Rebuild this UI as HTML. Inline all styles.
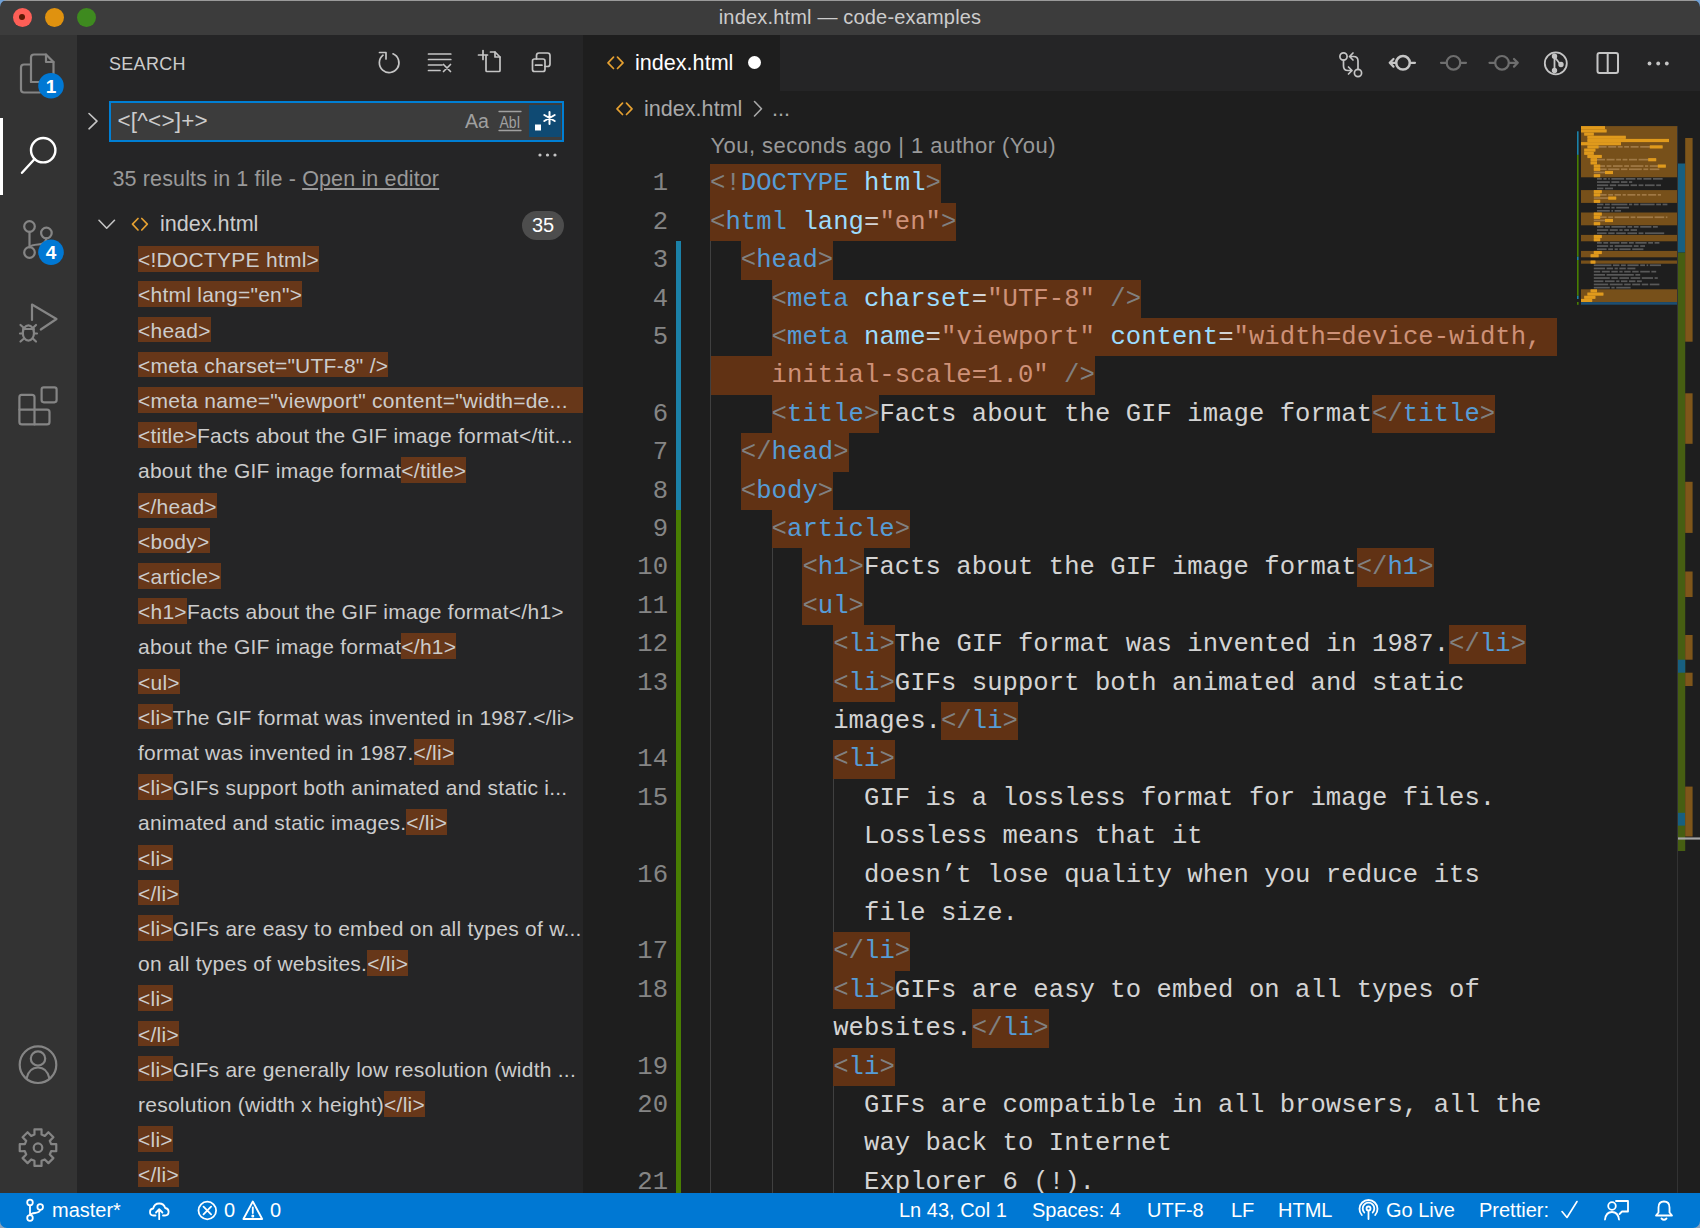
<!DOCTYPE html>
<html><head><meta charset="utf-8">
<style>
*{margin:0;padding:0;box-sizing:border-box}
html,body{width:1700px;height:1228px;overflow:hidden;background:#1e1e1e;font-family:"Liberation Sans",sans-serif}
.abs{position:absolute}
#title{position:absolute;left:0;top:0;width:1700px;height:35px;background:#3c3c3c;border-top:1px solid #9a9a9a}
#title .t{position:absolute;left:0;width:1700px;top:4.8px;text-align:center;color:#cccccc;font-size:20px;letter-spacing:0.18px}
.tl{position:absolute;top:6.6px;width:19px;height:19px;border-radius:50%}
#act{position:absolute;left:0;top:35px;width:77px;height:1158px;background:#333333}
#side{position:absolute;left:77px;top:35px;width:506px;height:1158px;background:#252526}
#tabs{position:absolute;left:583px;top:35px;width:1117px;height:56px;background:#252526}
#status{position:absolute;left:0;top:1193px;width:1700px;height:35px;background:#0078d3;color:#fff;font-size:20px}
.cl{position:absolute;white-space:pre;padding-top:1px;font-family:"Liberation Mono",monospace;font-size:25.60px;letter-spacing:0.037px;line-height:38.40px;height:38.40px}
.hl{position:absolute;height:38.40px;background:#613214}
.ln{position:absolute;padding-top:1px;left:600px;width:68px;text-align:right;font-family:"Liberation Mono",monospace;font-size:25.60px;line-height:38.40px;color:#858585}
.guide{position:absolute;width:1px;background:#404040}
.sr{position:absolute;left:138px;height:35.2px;padding-top:4.8px;white-space:pre;color:#cccccc;font-size:21px;letter-spacing:0.25px}
.sr span{display:inline-block;height:25.6px;line-height:27.6px;vertical-align:top}
.sr .m{background:#673719}
.sr .full{width:445px}
.st{position:absolute;top:0;line-height:35px;white-space:pre}
svg{position:absolute;overflow:visible}
</style></head><body>

<div id="title">
  <div class="tl" style="left:12.5px;background:#fe5f57"><div style="position:absolute;left:6.5px;top:6.5px;width:6px;height:6px;border-radius:50%;background:#5c1a06"></div></div>
  <div class="tl" style="left:44.5px;background:#e0920f"></div>
  <div class="tl" style="left:76.5px;background:#3e8a1f"></div>
  <div class="t">index.html — code-examples</div>
</div>

<div id="act">
  <div class="abs" style="left:0;top:83px;width:3px;height:77px;background:#ffffff"></div>
</div>

<div id="side">
  <div class="abs" style="left:32px;top:18.5px;color:#cccccc;font-size:18px;letter-spacing:0.3px">SEARCH</div>
  <div class="abs" style="left:32px;top:65.5px;width:455px;height:41px;background:#3c3c3c;border:2px solid #007fd4"></div>
  <div class="abs" style="left:40.5px;top:71px;color:#cccccc;font-size:22.5px;line-height:30px;letter-spacing:0.2px">&lt;[^&lt;&gt;]+&gt;</div>
  <div class="abs" style="left:452px;top:70px;width:32px;height:32px;background:#0f4a73"></div>
  <div class="abs" style="left:35.5px;top:129px;color:#999999;font-size:21.5px;line-height:30px;letter-spacing:0.14px">35 results in 1 file - <span style="text-decoration:underline">Open in editor</span></div>
  <div class="abs" style="left:83px;top:174px;color:#cccccc;font-size:21.6px;line-height:30px">index.html</div>
  <div class="abs" style="left:445px;top:176px;width:42px;height:29px;border-radius:15px;background:#4d4d4d;color:#fff;font-size:20px;line-height:29px;text-align:center">35</div>
</div>
<div class="abs" style="left:0;top:0">
<div class="sr" style="top:241.40px"><span class="m">&lt;!DOCTYPE html&gt;</span></div>
<div class="sr" style="top:276.60px"><span class="m">&lt;html lang="en"&gt;</span></div>
<div class="sr" style="top:311.80px"><span class="m">&lt;head&gt;</span></div>
<div class="sr" style="top:347.00px"><span class="m">&lt;meta charset="UTF-8" /&gt;</span></div>
<div class="sr" style="top:382.20px"><span class="m full">&lt;meta name="viewport" content="width=de...</span></div>
<div class="sr" style="top:417.40px"><span class="m">&lt;title&gt;</span><span>Facts about the GIF image format&lt;/tit...</span></div>
<div class="sr" style="top:452.60px"><span>about the GIF image format</span><span class="m">&lt;/title&gt;</span></div>
<div class="sr" style="top:487.80px"><span class="m">&lt;/head&gt;</span></div>
<div class="sr" style="top:523.00px"><span class="m">&lt;body&gt;</span></div>
<div class="sr" style="top:558.20px"><span class="m">&lt;article&gt;</span></div>
<div class="sr" style="top:593.40px"><span class="m">&lt;h1&gt;</span><span>Facts about the GIF image format&lt;/h1&gt;</span></div>
<div class="sr" style="top:628.60px"><span>about the GIF image format</span><span class="m">&lt;/h1&gt;</span></div>
<div class="sr" style="top:663.80px"><span class="m">&lt;ul&gt;</span></div>
<div class="sr" style="top:699.00px"><span class="m">&lt;li&gt;</span><span>The GIF format was invented in 1987.&lt;/li&gt;</span></div>
<div class="sr" style="top:734.20px"><span>format was invented in 1987.</span><span class="m">&lt;/li&gt;</span></div>
<div class="sr" style="top:769.40px"><span class="m">&lt;li&gt;</span><span>GIFs support both animated and static i...</span></div>
<div class="sr" style="top:804.60px"><span>animated and static images.</span><span class="m">&lt;/li&gt;</span></div>
<div class="sr" style="top:839.80px"><span class="m">&lt;li&gt;</span></div>
<div class="sr" style="top:875.00px"><span class="m">&lt;/li&gt;</span></div>
<div class="sr" style="top:910.20px"><span class="m">&lt;li&gt;</span><span>GIFs are easy to embed on all types of w...</span></div>
<div class="sr" style="top:945.40px"><span>on all types of websites.</span><span class="m">&lt;/li&gt;</span></div>
<div class="sr" style="top:980.60px"><span class="m">&lt;li&gt;</span></div>
<div class="sr" style="top:1015.80px"><span class="m">&lt;/li&gt;</span></div>
<div class="sr" style="top:1051.00px"><span class="m">&lt;li&gt;</span><span>GIFs are generally low resolution (width ...</span></div>
<div class="sr" style="top:1086.20px"><span>resolution (width x height)</span><span class="m">&lt;/li&gt;</span></div>
<div class="sr" style="top:1121.40px"><span class="m">&lt;li&gt;</span></div>
<div class="sr" style="top:1156.60px"><span class="m">&lt;/li&gt;</span></div>
</div>

<div id="tabs">
  <div class="abs" style="left:0;top:0;width:197px;height:56px;background:#1e1e1e"></div>
  <div class="abs" style="left:52px;top:13px;color:#ffffff;font-size:21.6px;line-height:30px">index.html</div>
  <div class="abs" style="left:165px;top:21px;width:13px;height:13px;border-radius:50%;background:#ffffff"></div>
</div>
<div class="abs" style="left:644px;top:94px;color:#a9a9a9;font-size:21.6px;line-height:30px">index.html</div>
<div class="abs" style="left:772px;top:94px;color:#a9a9a9;font-size:21.6px;line-height:30px">...</div>
<div class="abs" style="left:710.5px;top:131px;color:#999999;font-size:22px;line-height:30px;letter-spacing:0.45px">You, seconds ago | 1 author (You)</div>

<!-- git gutter -->
<div class="abs" style="left:676px;top:241.2px;width:5px;height:268.8px;background:#1b81a8"></div>
<div class="abs" style="left:676px;top:510px;width:5px;height:683px;background:#487e02"></div>

<div class="hl" style="left:710.00px;top:164.40px;width:231.00px"></div>
<div class="hl" style="left:710.00px;top:202.80px;width:246.40px"></div>
<div class="hl" style="left:740.80px;top:241.20px;width:92.40px"></div>
<div class="hl" style="left:771.60px;top:279.60px;width:369.60px"></div>
<div class="hl" style="left:771.60px;top:318.00px;width:785.40px"></div>
<div class="hl" style="left:710.00px;top:356.40px;width:385.00px"></div>
<div class="hl" style="left:771.60px;top:394.80px;width:107.80px"></div>
<div class="hl" style="left:1372.20px;top:394.80px;width:123.20px"></div>
<div class="hl" style="left:740.80px;top:433.20px;width:107.80px"></div>
<div class="hl" style="left:740.80px;top:471.60px;width:92.40px"></div>
<div class="hl" style="left:771.60px;top:510.00px;width:138.60px"></div>
<div class="hl" style="left:802.40px;top:548.40px;width:61.60px"></div>
<div class="hl" style="left:1356.80px;top:548.40px;width:77.00px"></div>
<div class="hl" style="left:802.40px;top:586.80px;width:61.60px"></div>
<div class="hl" style="left:833.20px;top:625.20px;width:61.60px"></div>
<div class="hl" style="left:1449.20px;top:625.20px;width:77.00px"></div>
<div class="hl" style="left:833.20px;top:663.60px;width:61.60px"></div>
<div class="hl" style="left:941.00px;top:702.00px;width:77.00px"></div>
<div class="hl" style="left:833.20px;top:740.40px;width:61.60px"></div>
<div class="hl" style="left:833.20px;top:932.40px;width:77.00px"></div>
<div class="hl" style="left:833.20px;top:970.80px;width:61.60px"></div>
<div class="hl" style="left:971.80px;top:1009.20px;width:77.00px"></div>
<div class="hl" style="left:833.20px;top:1047.60px;width:61.60px"></div>
<div class="cl" style="left:710.00px;top:164.40px"><span style="color:#808080">&lt;!</span><span style="color:#569cd6">DOCTYPE</span><span style="color:#d4d4d4"> </span><span style="color:#9cdcfe">html</span><span style="color:#808080">&gt;</span></div>
<div class="ln" style="top:164.40px">1</div>
<div class="cl" style="left:710.00px;top:202.80px"><span style="color:#808080">&lt;</span><span style="color:#569cd6">html</span><span style="color:#d4d4d4"> </span><span style="color:#9cdcfe">lang</span><span style="color:#d4d4d4">=</span><span style="color:#ce9178">"en"</span><span style="color:#808080">&gt;</span></div>
<div class="ln" style="top:202.80px">2</div>
<div class="cl" style="left:740.80px;top:241.20px"><span style="color:#808080">&lt;</span><span style="color:#569cd6">head</span><span style="color:#808080">&gt;</span></div>
<div class="ln" style="top:241.20px">3</div>
<div class="cl" style="left:771.60px;top:279.60px"><span style="color:#808080">&lt;</span><span style="color:#569cd6">meta</span><span style="color:#d4d4d4"> </span><span style="color:#9cdcfe">charset</span><span style="color:#d4d4d4">=</span><span style="color:#ce9178">"UTF-8"</span><span style="color:#808080"> /&gt;</span></div>
<div class="ln" style="top:279.60px">4</div>
<div class="cl" style="left:771.60px;top:318.00px"><span style="color:#808080">&lt;</span><span style="color:#569cd6">meta</span><span style="color:#d4d4d4"> </span><span style="color:#9cdcfe">name</span><span style="color:#d4d4d4">=</span><span style="color:#ce9178">"viewport"</span><span style="color:#d4d4d4"> </span><span style="color:#9cdcfe">content</span><span style="color:#d4d4d4">=</span><span style="color:#ce9178">"width=device-width,</span></div>
<div class="ln" style="top:318.00px">5</div>
<div class="cl" style="left:771.60px;top:356.40px"><span style="color:#ce9178">initial-scale=1.0"</span><span style="color:#808080"> /&gt;</span></div>
<div class="cl" style="left:771.60px;top:394.80px"><span style="color:#808080">&lt;</span><span style="color:#569cd6">title</span><span style="color:#808080">&gt;</span><span style="color:#d4d4d4">Facts about the GIF image format</span><span style="color:#808080">&lt;/</span><span style="color:#569cd6">title</span><span style="color:#808080">&gt;</span></div>
<div class="ln" style="top:394.80px">6</div>
<div class="cl" style="left:740.80px;top:433.20px"><span style="color:#808080">&lt;/</span><span style="color:#569cd6">head</span><span style="color:#808080">&gt;</span></div>
<div class="ln" style="top:433.20px">7</div>
<div class="cl" style="left:740.80px;top:471.60px"><span style="color:#808080">&lt;</span><span style="color:#569cd6">body</span><span style="color:#808080">&gt;</span></div>
<div class="ln" style="top:471.60px">8</div>
<div class="cl" style="left:771.60px;top:510.00px"><span style="color:#808080">&lt;</span><span style="color:#569cd6">article</span><span style="color:#808080">&gt;</span></div>
<div class="ln" style="top:510.00px">9</div>
<div class="cl" style="left:802.40px;top:548.40px"><span style="color:#808080">&lt;</span><span style="color:#569cd6">h1</span><span style="color:#808080">&gt;</span><span style="color:#d4d4d4">Facts about the GIF image format</span><span style="color:#808080">&lt;/</span><span style="color:#569cd6">h1</span><span style="color:#808080">&gt;</span></div>
<div class="ln" style="top:548.40px">10</div>
<div class="cl" style="left:802.40px;top:586.80px"><span style="color:#808080">&lt;</span><span style="color:#569cd6">ul</span><span style="color:#808080">&gt;</span></div>
<div class="ln" style="top:586.80px">11</div>
<div class="cl" style="left:833.20px;top:625.20px"><span style="color:#808080">&lt;</span><span style="color:#569cd6">li</span><span style="color:#808080">&gt;</span><span style="color:#d4d4d4">The GIF format was invented in 1987.</span><span style="color:#808080">&lt;/</span><span style="color:#569cd6">li</span><span style="color:#808080">&gt;</span></div>
<div class="ln" style="top:625.20px">12</div>
<div class="cl" style="left:833.20px;top:663.60px"><span style="color:#808080">&lt;</span><span style="color:#569cd6">li</span><span style="color:#808080">&gt;</span><span style="color:#d4d4d4">GIFs support both animated and static </span></div>
<div class="ln" style="top:663.60px">13</div>
<div class="cl" style="left:833.20px;top:702.00px"><span style="color:#d4d4d4">images.</span><span style="color:#808080">&lt;/</span><span style="color:#569cd6">li</span><span style="color:#808080">&gt;</span></div>
<div class="cl" style="left:833.20px;top:740.40px"><span style="color:#808080">&lt;</span><span style="color:#569cd6">li</span><span style="color:#808080">&gt;</span></div>
<div class="ln" style="top:740.40px">14</div>
<div class="cl" style="left:864.00px;top:778.80px"><span style="color:#d4d4d4">GIF is a lossless format for image files.</span></div>
<div class="ln" style="top:778.80px">15</div>
<div class="cl" style="left:864.00px;top:817.20px"><span style="color:#d4d4d4">Lossless means that it</span></div>
<div class="cl" style="left:864.00px;top:855.60px"><span style="color:#d4d4d4">doesn’t lose quality when you reduce its</span></div>
<div class="ln" style="top:855.60px">16</div>
<div class="cl" style="left:864.00px;top:894.00px"><span style="color:#d4d4d4">file size.</span></div>
<div class="cl" style="left:833.20px;top:932.40px"><span style="color:#808080">&lt;/</span><span style="color:#569cd6">li</span><span style="color:#808080">&gt;</span></div>
<div class="ln" style="top:932.40px">17</div>
<div class="cl" style="left:833.20px;top:970.80px"><span style="color:#808080">&lt;</span><span style="color:#569cd6">li</span><span style="color:#808080">&gt;</span><span style="color:#d4d4d4">GIFs are easy to embed on all types of</span></div>
<div class="ln" style="top:970.80px">18</div>
<div class="cl" style="left:833.20px;top:1009.20px"><span style="color:#d4d4d4">websites.</span><span style="color:#808080">&lt;/</span><span style="color:#569cd6">li</span><span style="color:#808080">&gt;</span></div>
<div class="cl" style="left:833.20px;top:1047.60px"><span style="color:#808080">&lt;</span><span style="color:#569cd6">li</span><span style="color:#808080">&gt;</span></div>
<div class="ln" style="top:1047.60px">19</div>
<div class="cl" style="left:864.00px;top:1086.00px"><span style="color:#d4d4d4">GIFs are compatible in all browsers, all the</span></div>
<div class="ln" style="top:1086.00px">20</div>
<div class="cl" style="left:864.00px;top:1124.40px"><span style="color:#d4d4d4">way back to Internet</span></div>
<div class="cl" style="left:864.00px;top:1162.80px"><span style="color:#d4d4d4">Explorer 6 (!).</span></div>
<div class="ln" style="top:1162.80px">21</div>
<div class="guide" style="left:710.00px;top:241.20px;height:960.00px"></div>
<div class="guide" style="left:771.60px;top:548.40px;height:652.80px"></div>
<div class="guide" style="left:833.20px;top:778.80px;height:153.60px"></div>
<div class="guide" style="left:833.20px;top:1086.00px;height:115.20px"></div>
<svg width="1700" height="1228" style="position:absolute;left:0;top:0"><rect x="1581.0" y="126.10" width="96.5" height="51.20" fill="#77501a"/><rect x="1581.0" y="190.10" width="96.5" height="12.80" fill="#77501a"/><rect x="1581.0" y="212.50" width="96.5" height="12.80" fill="#77501a"/><rect x="1581.0" y="234.90" width="96.5" height="6.40" fill="#77501a"/><rect x="1581.0" y="250.90" width="96.5" height="6.40" fill="#77501a"/><rect x="1581.0" y="260.50" width="96.5" height="3.20" fill="#77501a"/><rect x="1581.0" y="289.30" width="96.5" height="12.80" fill="#77501a"/><rect x="1581.0" y="126.80" width="14.4" height="1.7" fill="#c29a6a" opacity="0.55"/><rect x="1597.0" y="126.80" width="8.0" height="1.7" fill="#c29a6a" opacity="0.55"/><rect x="1581.0" y="126.10" width="24.0" height="3.20" fill="#e09a1c"/><rect x="1581.0" y="130.00" width="8.0" height="1.7" fill="#c29a6a" opacity="0.55"/><rect x="1590.6" y="130.00" width="16.0" height="1.7" fill="#c29a6a" opacity="0.55"/><rect x="1581.0" y="129.30" width="25.6" height="3.20" fill="#e09a1c"/><rect x="1584.2" y="133.20" width="9.6" height="1.7" fill="#c29a6a" opacity="0.55"/><rect x="1584.2" y="132.50" width="9.6" height="3.20" fill="#e09a1c"/><rect x="1587.4" y="136.40" width="8.0" height="1.7" fill="#c29a6a" opacity="0.55"/><rect x="1597.0" y="136.40" width="24.0" height="1.7" fill="#c29a6a" opacity="0.55"/><rect x="1622.6" y="136.40" width="3.2" height="1.7" fill="#c29a6a" opacity="0.55"/><rect x="1587.4" y="135.70" width="38.4" height="3.20" fill="#e09a1c"/><rect x="1587.4" y="139.60" width="8.0" height="1.7" fill="#c29a6a" opacity="0.55"/><rect x="1597.0" y="139.60" width="24.0" height="1.7" fill="#c29a6a" opacity="0.55"/><rect x="1622.6" y="139.60" width="44.8" height="1.7" fill="#c29a6a" opacity="0.55"/><rect x="1587.4" y="138.90" width="81.6" height="3.20" fill="#e09a1c"/><rect x="1587.4" y="142.80" width="28.8" height="1.7" fill="#c29a6a" opacity="0.55"/><rect x="1617.8" y="142.80" width="3.2" height="1.7" fill="#c29a6a" opacity="0.55"/><rect x="1581.0" y="142.10" width="40.0" height="3.20" fill="#e09a1c"/><rect x="1587.4" y="146.00" width="19.2" height="1.7" fill="#c29a6a" opacity="0.55"/><rect x="1608.2" y="146.00" width="8.0" height="1.7" fill="#c29a6a" opacity="0.55"/><rect x="1617.8" y="146.00" width="4.8" height="1.7" fill="#c29a6a" opacity="0.55"/><rect x="1624.2" y="146.00" width="4.8" height="1.7" fill="#c29a6a" opacity="0.55"/><rect x="1630.6" y="146.00" width="8.0" height="1.7" fill="#c29a6a" opacity="0.55"/><rect x="1640.2" y="146.00" width="22.4" height="1.7" fill="#c29a6a" opacity="0.55"/><rect x="1587.4" y="145.30" width="11.2" height="3.20" fill="#e09a1c"/><rect x="1649.8" y="145.30" width="12.8" height="3.20" fill="#e09a1c"/><rect x="1584.2" y="149.20" width="11.2" height="1.7" fill="#c29a6a" opacity="0.55"/><rect x="1584.2" y="148.50" width="11.2" height="3.20" fill="#e09a1c"/><rect x="1584.2" y="152.40" width="9.6" height="1.7" fill="#c29a6a" opacity="0.55"/><rect x="1584.2" y="151.70" width="9.6" height="3.20" fill="#e09a1c"/><rect x="1587.4" y="155.60" width="14.4" height="1.7" fill="#c29a6a" opacity="0.55"/><rect x="1587.4" y="154.90" width="14.4" height="3.20" fill="#e09a1c"/><rect x="1590.6" y="158.80" width="14.4" height="1.7" fill="#c29a6a" opacity="0.55"/><rect x="1606.6" y="158.80" width="8.0" height="1.7" fill="#c29a6a" opacity="0.55"/><rect x="1616.2" y="158.80" width="4.8" height="1.7" fill="#c29a6a" opacity="0.55"/><rect x="1622.6" y="158.80" width="4.8" height="1.7" fill="#c29a6a" opacity="0.55"/><rect x="1629.0" y="158.80" width="8.0" height="1.7" fill="#c29a6a" opacity="0.55"/><rect x="1638.6" y="158.80" width="17.6" height="1.7" fill="#c29a6a" opacity="0.55"/><rect x="1590.6" y="158.10" width="6.4" height="3.20" fill="#e09a1c"/><rect x="1648.2" y="158.10" width="8.0" height="3.20" fill="#e09a1c"/><rect x="1590.6" y="162.00" width="6.4" height="1.7" fill="#c29a6a" opacity="0.55"/><rect x="1590.6" y="161.30" width="6.4" height="3.20" fill="#e09a1c"/><rect x="1593.8" y="165.20" width="11.2" height="1.7" fill="#c29a6a" opacity="0.55"/><rect x="1606.6" y="165.20" width="4.8" height="1.7" fill="#c29a6a" opacity="0.55"/><rect x="1613.0" y="165.20" width="9.6" height="1.7" fill="#c29a6a" opacity="0.55"/><rect x="1624.2" y="165.20" width="4.8" height="1.7" fill="#c29a6a" opacity="0.55"/><rect x="1630.6" y="165.20" width="12.8" height="1.7" fill="#c29a6a" opacity="0.55"/><rect x="1645.0" y="165.20" width="3.2" height="1.7" fill="#c29a6a" opacity="0.55"/><rect x="1649.8" y="165.20" width="16.0" height="1.7" fill="#c29a6a" opacity="0.55"/><rect x="1593.8" y="164.50" width="6.4" height="3.20" fill="#e09a1c"/><rect x="1657.8" y="164.50" width="8.0" height="3.20" fill="#e09a1c"/><rect x="1593.8" y="168.40" width="12.8" height="1.7" fill="#c29a6a" opacity="0.55"/><rect x="1608.2" y="168.40" width="11.2" height="1.7" fill="#c29a6a" opacity="0.55"/><rect x="1621.0" y="168.40" width="6.4" height="1.7" fill="#c29a6a" opacity="0.55"/><rect x="1629.0" y="168.40" width="12.8" height="1.7" fill="#c29a6a" opacity="0.55"/><rect x="1643.4" y="168.40" width="4.8" height="1.7" fill="#c29a6a" opacity="0.55"/><rect x="1649.8" y="168.40" width="9.6" height="1.7" fill="#c29a6a" opacity="0.55"/><rect x="1593.8" y="167.70" width="6.4" height="3.20" fill="#e09a1c"/><rect x="1593.8" y="171.60" width="19.2" height="1.7" fill="#c29a6a" opacity="0.55"/><rect x="1605.0" y="170.90" width="8.0" height="3.20" fill="#e09a1c"/><rect x="1593.8" y="174.80" width="6.4" height="1.7" fill="#c29a6a" opacity="0.55"/><rect x="1593.8" y="174.10" width="6.4" height="3.20" fill="#e09a1c"/><rect x="1597.0" y="178.00" width="4.8" height="1.7" fill="#8a8a8a" opacity="0.55"/><rect x="1603.4" y="178.00" width="3.2" height="1.7" fill="#8a8a8a" opacity="0.55"/><rect x="1608.2" y="178.00" width="1.6" height="1.7" fill="#8a8a8a" opacity="0.55"/><rect x="1611.4" y="178.00" width="12.8" height="1.7" fill="#8a8a8a" opacity="0.55"/><rect x="1625.8" y="178.00" width="9.6" height="1.7" fill="#8a8a8a" opacity="0.55"/><rect x="1637.0" y="178.00" width="4.8" height="1.7" fill="#8a8a8a" opacity="0.55"/><rect x="1643.4" y="178.00" width="8.0" height="1.7" fill="#8a8a8a" opacity="0.55"/><rect x="1653.0" y="178.00" width="9.6" height="1.7" fill="#8a8a8a" opacity="0.55"/><rect x="1597.0" y="181.20" width="12.8" height="1.7" fill="#8a8a8a" opacity="0.55"/><rect x="1611.4" y="181.20" width="8.0" height="1.7" fill="#8a8a8a" opacity="0.55"/><rect x="1621.0" y="181.20" width="6.4" height="1.7" fill="#8a8a8a" opacity="0.55"/><rect x="1629.0" y="181.20" width="3.2" height="1.7" fill="#8a8a8a" opacity="0.55"/><rect x="1597.0" y="184.40" width="11.2" height="1.7" fill="#8a8a8a" opacity="0.55"/><rect x="1609.8" y="184.40" width="6.4" height="1.7" fill="#8a8a8a" opacity="0.55"/><rect x="1617.8" y="184.40" width="11.2" height="1.7" fill="#8a8a8a" opacity="0.55"/><rect x="1630.6" y="184.40" width="6.4" height="1.7" fill="#8a8a8a" opacity="0.55"/><rect x="1638.6" y="184.40" width="4.8" height="1.7" fill="#8a8a8a" opacity="0.55"/><rect x="1645.0" y="184.40" width="9.6" height="1.7" fill="#8a8a8a" opacity="0.55"/><rect x="1656.2" y="184.40" width="4.8" height="1.7" fill="#8a8a8a" opacity="0.55"/><rect x="1597.0" y="187.60" width="6.4" height="1.7" fill="#8a8a8a" opacity="0.55"/><rect x="1605.0" y="187.60" width="8.0" height="1.7" fill="#8a8a8a" opacity="0.55"/><rect x="1593.8" y="190.80" width="8.0" height="1.7" fill="#c29a6a" opacity="0.55"/><rect x="1593.8" y="190.10" width="8.0" height="3.20" fill="#e09a1c"/><rect x="1593.8" y="194.00" width="12.8" height="1.7" fill="#c29a6a" opacity="0.55"/><rect x="1608.2" y="194.00" width="4.8" height="1.7" fill="#c29a6a" opacity="0.55"/><rect x="1614.6" y="194.00" width="6.4" height="1.7" fill="#c29a6a" opacity="0.55"/><rect x="1622.6" y="194.00" width="3.2" height="1.7" fill="#c29a6a" opacity="0.55"/><rect x="1627.4" y="194.00" width="8.0" height="1.7" fill="#c29a6a" opacity="0.55"/><rect x="1637.0" y="194.00" width="3.2" height="1.7" fill="#c29a6a" opacity="0.55"/><rect x="1641.8" y="194.00" width="4.8" height="1.7" fill="#c29a6a" opacity="0.55"/><rect x="1648.2" y="194.00" width="8.0" height="1.7" fill="#c29a6a" opacity="0.55"/><rect x="1657.8" y="194.00" width="3.2" height="1.7" fill="#c29a6a" opacity="0.55"/><rect x="1593.8" y="193.30" width="6.4" height="3.20" fill="#e09a1c"/><rect x="1593.8" y="197.20" width="22.4" height="1.7" fill="#c29a6a" opacity="0.55"/><rect x="1608.2" y="196.50" width="8.0" height="3.20" fill="#e09a1c"/><rect x="1593.8" y="200.40" width="6.4" height="1.7" fill="#c29a6a" opacity="0.55"/><rect x="1593.8" y="199.70" width="6.4" height="3.20" fill="#e09a1c"/><rect x="1597.0" y="203.60" width="6.4" height="1.7" fill="#8a8a8a" opacity="0.55"/><rect x="1605.0" y="203.60" width="4.8" height="1.7" fill="#8a8a8a" opacity="0.55"/><rect x="1611.4" y="203.60" width="16.0" height="1.7" fill="#8a8a8a" opacity="0.55"/><rect x="1629.0" y="203.60" width="3.2" height="1.7" fill="#8a8a8a" opacity="0.55"/><rect x="1633.8" y="203.60" width="4.8" height="1.7" fill="#8a8a8a" opacity="0.55"/><rect x="1640.2" y="203.60" width="14.4" height="1.7" fill="#8a8a8a" opacity="0.55"/><rect x="1656.2" y="203.60" width="4.8" height="1.7" fill="#8a8a8a" opacity="0.55"/><rect x="1662.6" y="203.60" width="4.8" height="1.7" fill="#8a8a8a" opacity="0.55"/><rect x="1597.0" y="206.80" width="4.8" height="1.7" fill="#8a8a8a" opacity="0.55"/><rect x="1603.4" y="206.80" width="6.4" height="1.7" fill="#8a8a8a" opacity="0.55"/><rect x="1611.4" y="206.80" width="3.2" height="1.7" fill="#8a8a8a" opacity="0.55"/><rect x="1616.2" y="206.80" width="12.8" height="1.7" fill="#8a8a8a" opacity="0.55"/><rect x="1597.0" y="210.00" width="12.8" height="1.7" fill="#8a8a8a" opacity="0.55"/><rect x="1611.4" y="210.00" width="1.6" height="1.7" fill="#8a8a8a" opacity="0.55"/><rect x="1614.6" y="210.00" width="6.4" height="1.7" fill="#8a8a8a" opacity="0.55"/><rect x="1593.8" y="213.20" width="8.0" height="1.7" fill="#c29a6a" opacity="0.55"/><rect x="1593.8" y="212.50" width="8.0" height="3.20" fill="#e09a1c"/><rect x="1593.8" y="216.40" width="12.8" height="1.7" fill="#c29a6a" opacity="0.55"/><rect x="1608.2" y="216.40" width="4.8" height="1.7" fill="#c29a6a" opacity="0.55"/><rect x="1614.6" y="216.40" width="14.4" height="1.7" fill="#c29a6a" opacity="0.55"/><rect x="1630.6" y="216.40" width="4.8" height="1.7" fill="#c29a6a" opacity="0.55"/><rect x="1637.0" y="216.40" width="16.0" height="1.7" fill="#c29a6a" opacity="0.55"/><rect x="1654.6" y="216.40" width="9.6" height="1.7" fill="#c29a6a" opacity="0.55"/><rect x="1665.8" y="216.40" width="1.6" height="1.7" fill="#c29a6a" opacity="0.55"/><rect x="1593.8" y="215.70" width="6.4" height="3.20" fill="#e09a1c"/><rect x="1593.8" y="219.60" width="19.2" height="1.7" fill="#c29a6a" opacity="0.55"/><rect x="1605.0" y="218.90" width="8.0" height="3.20" fill="#e09a1c"/><rect x="1593.8" y="222.80" width="6.4" height="1.7" fill="#c29a6a" opacity="0.55"/><rect x="1593.8" y="222.10" width="6.4" height="3.20" fill="#e09a1c"/><rect x="1597.0" y="226.00" width="6.4" height="1.7" fill="#8a8a8a" opacity="0.55"/><rect x="1605.0" y="226.00" width="4.8" height="1.7" fill="#8a8a8a" opacity="0.55"/><rect x="1611.4" y="226.00" width="14.4" height="1.7" fill="#8a8a8a" opacity="0.55"/><rect x="1627.4" y="226.00" width="4.8" height="1.7" fill="#8a8a8a" opacity="0.55"/><rect x="1633.8" y="226.00" width="4.8" height="1.7" fill="#8a8a8a" opacity="0.55"/><rect x="1640.2" y="226.00" width="11.2" height="1.7" fill="#8a8a8a" opacity="0.55"/><rect x="1653.0" y="226.00" width="4.8" height="1.7" fill="#8a8a8a" opacity="0.55"/><rect x="1597.0" y="229.20" width="11.2" height="1.7" fill="#8a8a8a" opacity="0.55"/><rect x="1609.8" y="229.20" width="8.0" height="1.7" fill="#8a8a8a" opacity="0.55"/><rect x="1619.4" y="229.20" width="3.2" height="1.7" fill="#8a8a8a" opacity="0.55"/><rect x="1624.2" y="229.20" width="4.8" height="1.7" fill="#8a8a8a" opacity="0.55"/><rect x="1630.6" y="229.20" width="6.4" height="1.7" fill="#8a8a8a" opacity="0.55"/><rect x="1597.0" y="232.40" width="9.6" height="1.7" fill="#8a8a8a" opacity="0.55"/><rect x="1608.2" y="232.40" width="6.4" height="1.7" fill="#8a8a8a" opacity="0.55"/><rect x="1616.2" y="232.40" width="9.6" height="1.7" fill="#8a8a8a" opacity="0.55"/><rect x="1627.4" y="232.40" width="9.6" height="1.7" fill="#8a8a8a" opacity="0.55"/><rect x="1638.6" y="232.40" width="4.8" height="1.7" fill="#8a8a8a" opacity="0.55"/><rect x="1645.0" y="232.40" width="19.2" height="1.7" fill="#8a8a8a" opacity="0.55"/><rect x="1593.8" y="235.60" width="8.0" height="1.7" fill="#c29a6a" opacity="0.55"/><rect x="1593.8" y="234.90" width="8.0" height="3.20" fill="#e09a1c"/><rect x="1593.8" y="238.80" width="6.4" height="1.7" fill="#c29a6a" opacity="0.55"/><rect x="1593.8" y="238.10" width="6.4" height="3.20" fill="#e09a1c"/><rect x="1597.0" y="242.00" width="4.8" height="1.7" fill="#8a8a8a" opacity="0.55"/><rect x="1603.4" y="242.00" width="4.8" height="1.7" fill="#8a8a8a" opacity="0.55"/><rect x="1609.8" y="242.00" width="9.6" height="1.7" fill="#8a8a8a" opacity="0.55"/><rect x="1621.0" y="242.00" width="6.4" height="1.7" fill="#8a8a8a" opacity="0.55"/><rect x="1629.0" y="242.00" width="4.8" height="1.7" fill="#8a8a8a" opacity="0.55"/><rect x="1635.4" y="242.00" width="11.2" height="1.7" fill="#8a8a8a" opacity="0.55"/><rect x="1648.2" y="242.00" width="4.8" height="1.7" fill="#8a8a8a" opacity="0.55"/><rect x="1654.6" y="242.00" width="4.8" height="1.7" fill="#8a8a8a" opacity="0.55"/><rect x="1597.0" y="245.20" width="11.2" height="1.7" fill="#8a8a8a" opacity="0.55"/><rect x="1609.8" y="245.20" width="3.2" height="1.7" fill="#8a8a8a" opacity="0.55"/><rect x="1614.6" y="245.20" width="17.6" height="1.7" fill="#8a8a8a" opacity="0.55"/><rect x="1633.8" y="245.20" width="4.8" height="1.7" fill="#8a8a8a" opacity="0.55"/><rect x="1640.2" y="245.20" width="4.8" height="1.7" fill="#8a8a8a" opacity="0.55"/><rect x="1597.0" y="248.40" width="9.6" height="1.7" fill="#8a8a8a" opacity="0.55"/><rect x="1608.2" y="248.40" width="4.8" height="1.7" fill="#8a8a8a" opacity="0.55"/><rect x="1614.6" y="248.40" width="3.2" height="1.7" fill="#8a8a8a" opacity="0.55"/><rect x="1619.4" y="248.40" width="11.2" height="1.7" fill="#8a8a8a" opacity="0.55"/><rect x="1632.2" y="248.40" width="11.2" height="1.7" fill="#8a8a8a" opacity="0.55"/><rect x="1593.8" y="251.60" width="8.0" height="1.7" fill="#c29a6a" opacity="0.55"/><rect x="1593.8" y="250.90" width="8.0" height="3.20" fill="#e09a1c"/><rect x="1590.6" y="254.80" width="8.0" height="1.7" fill="#c29a6a" opacity="0.55"/><rect x="1590.6" y="254.10" width="8.0" height="3.20" fill="#e09a1c"/><rect x="1590.6" y="261.20" width="4.8" height="1.7" fill="#c29a6a" opacity="0.55"/><rect x="1590.6" y="260.50" width="4.8" height="3.20" fill="#e09a1c"/><rect x="1593.8" y="264.40" width="17.6" height="1.7" fill="#8a8a8a" opacity="0.55"/><rect x="1613.0" y="264.40" width="6.4" height="1.7" fill="#8a8a8a" opacity="0.55"/><rect x="1621.0" y="264.40" width="4.8" height="1.7" fill="#8a8a8a" opacity="0.55"/><rect x="1627.4" y="264.40" width="11.2" height="1.7" fill="#8a8a8a" opacity="0.55"/><rect x="1640.2" y="264.40" width="4.8" height="1.7" fill="#8a8a8a" opacity="0.55"/><rect x="1646.6" y="264.40" width="1.6" height="1.7" fill="#8a8a8a" opacity="0.55"/><rect x="1649.8" y="264.40" width="11.2" height="1.7" fill="#8a8a8a" opacity="0.55"/><rect x="1593.8" y="267.60" width="11.2" height="1.7" fill="#8a8a8a" opacity="0.55"/><rect x="1606.6" y="267.60" width="6.4" height="1.7" fill="#8a8a8a" opacity="0.55"/><rect x="1614.6" y="267.60" width="3.2" height="1.7" fill="#8a8a8a" opacity="0.55"/><rect x="1619.4" y="267.60" width="6.4" height="1.7" fill="#8a8a8a" opacity="0.55"/><rect x="1627.4" y="267.60" width="8.0" height="1.7" fill="#8a8a8a" opacity="0.55"/><rect x="1593.8" y="270.80" width="6.4" height="1.7" fill="#8a8a8a" opacity="0.55"/><rect x="1601.8" y="270.80" width="8.0" height="1.7" fill="#8a8a8a" opacity="0.55"/><rect x="1611.4" y="270.80" width="6.4" height="1.7" fill="#8a8a8a" opacity="0.55"/><rect x="1619.4" y="270.80" width="3.2" height="1.7" fill="#8a8a8a" opacity="0.55"/><rect x="1624.2" y="270.80" width="6.4" height="1.7" fill="#8a8a8a" opacity="0.55"/><rect x="1632.2" y="270.80" width="6.4" height="1.7" fill="#8a8a8a" opacity="0.55"/><rect x="1640.2" y="270.80" width="9.6" height="1.7" fill="#8a8a8a" opacity="0.55"/><rect x="1651.4" y="270.80" width="4.8" height="1.7" fill="#8a8a8a" opacity="0.55"/><rect x="1593.8" y="274.00" width="11.2" height="1.7" fill="#8a8a8a" opacity="0.55"/><rect x="1606.6" y="274.00" width="27.2" height="1.7" fill="#8a8a8a" opacity="0.55"/><rect x="1635.4" y="274.00" width="4.8" height="1.7" fill="#8a8a8a" opacity="0.55"/><rect x="1593.8" y="277.20" width="16.0" height="1.7" fill="#8a8a8a" opacity="0.55"/><rect x="1611.4" y="277.20" width="6.4" height="1.7" fill="#8a8a8a" opacity="0.55"/><rect x="1619.4" y="277.20" width="9.6" height="1.7" fill="#8a8a8a" opacity="0.55"/><rect x="1630.6" y="277.20" width="9.6" height="1.7" fill="#8a8a8a" opacity="0.55"/><rect x="1641.8" y="277.20" width="11.2" height="1.7" fill="#8a8a8a" opacity="0.55"/><rect x="1654.6" y="277.20" width="3.2" height="1.7" fill="#8a8a8a" opacity="0.55"/><rect x="1593.8" y="280.40" width="9.6" height="1.7" fill="#8a8a8a" opacity="0.55"/><rect x="1605.0" y="280.40" width="9.6" height="1.7" fill="#8a8a8a" opacity="0.55"/><rect x="1616.2" y="280.40" width="3.2" height="1.7" fill="#8a8a8a" opacity="0.55"/><rect x="1621.0" y="280.40" width="6.4" height="1.7" fill="#8a8a8a" opacity="0.55"/><rect x="1629.0" y="280.40" width="6.4" height="1.7" fill="#8a8a8a" opacity="0.55"/><rect x="1637.0" y="280.40" width="4.8" height="1.7" fill="#8a8a8a" opacity="0.55"/><rect x="1593.8" y="283.60" width="14.4" height="1.7" fill="#8a8a8a" opacity="0.55"/><rect x="1609.8" y="283.60" width="12.8" height="1.7" fill="#8a8a8a" opacity="0.55"/><rect x="1624.2" y="283.60" width="6.4" height="1.7" fill="#8a8a8a" opacity="0.55"/><rect x="1632.2" y="283.60" width="8.0" height="1.7" fill="#8a8a8a" opacity="0.55"/><rect x="1641.8" y="283.60" width="6.4" height="1.7" fill="#8a8a8a" opacity="0.55"/><rect x="1649.8" y="283.60" width="9.6" height="1.7" fill="#8a8a8a" opacity="0.55"/><rect x="1593.8" y="286.80" width="16.0" height="1.7" fill="#8a8a8a" opacity="0.55"/><rect x="1611.4" y="286.80" width="3.2" height="1.7" fill="#8a8a8a" opacity="0.55"/><rect x="1616.2" y="286.80" width="14.4" height="1.7" fill="#8a8a8a" opacity="0.55"/><rect x="1590.6" y="290.00" width="6.4" height="1.7" fill="#c29a6a" opacity="0.55"/><rect x="1590.6" y="289.30" width="6.4" height="3.20" fill="#e09a1c"/><rect x="1587.4" y="293.20" width="16.0" height="1.7" fill="#c29a6a" opacity="0.55"/><rect x="1587.4" y="292.50" width="16.0" height="3.20" fill="#e09a1c"/><rect x="1584.2" y="296.40" width="11.2" height="1.7" fill="#c29a6a" opacity="0.55"/><rect x="1584.2" y="295.70" width="11.2" height="3.20" fill="#e09a1c"/><rect x="1581.0" y="299.60" width="11.2" height="1.7" fill="#c29a6a" opacity="0.55"/><rect x="1581.0" y="298.90" width="11.2" height="3.20" fill="#e09a1c"/><rect x="1581.0" y="302.10" width="96.5" height="2.6" fill="#1d4f73"/><rect x="1577" y="131.3" width="1.6" height="23.6" fill="#1b81a8"/><rect x="1577" y="154.9" width="1.6" height="101.8" fill="#487e02"/><rect x="1577" y="256.7" width="1.6" height="3.3" fill="#1b81a8"/><rect x="1577" y="260.0" width="1.6" height="35.8" fill="#487e02"/><rect x="1577" y="295.8" width="1.6" height="3.2" fill="#1b81a8"/><rect x="1577" y="302.0" width="1.6" height="2.8" fill="#487e02"/><rect x="1677" y="126.4" width="1" height="1066.4" fill="#333333"/><rect x="1678" y="163.5" width="7.2" height="89.1" fill="#175f80"/><rect x="1678" y="252.6" width="7.2" height="598.4" fill="#465e12"/><rect x="1678" y="659.7" width="7.2" height="13.0" fill="#175f80"/><rect x="1678" y="812.8" width="7.2" height="12.8" fill="#175f80"/><rect x="1685.2" y="138.0" width="7.4" height="203.7" fill="#7f561a"/><rect x="1685.2" y="393.3" width="7.4" height="50.5" fill="#7f561a"/><rect x="1685.2" y="481.8" width="7.4" height="51.1" fill="#7f561a"/><rect x="1685.2" y="571.5" width="7.4" height="25.5" fill="#7f561a"/><rect x="1685.2" y="635.0" width="7.4" height="24.7" fill="#7f561a"/><rect x="1685.2" y="672.7" width="7.4" height="13.3" fill="#7f561a"/><rect x="1685.2" y="786.6" width="7.4" height="49.9" fill="#7f561a"/><rect x="1678" y="837.4" width="22" height="2.2" fill="#a5a5a5"/></svg>

<div id="status">
  <div class="st" style="left:52px">master*</div>
  <div class="st" style="left:224px">0</div>
  <div class="st" style="left:270px">0</div>
  <div class="st" style="left:899px">Ln 43, Col 1</div>
  <div class="st" style="left:1032px">Spaces: 4</div>
  <div class="st" style="left:1147px">UTF-8</div>
  <div class="st" style="left:1231px">LF</div>
  <div class="st" style="left:1278px">HTML</div>
  <div class="st" style="left:1386px">Go Live</div>
  <div class="st" style="left:1479px">Prettier:</div>
</div>
<svg width="1700" height="1228" viewBox="0 0 1700 1228" style="left:0;top:0;position:absolute" fill="none" stroke-linecap="round" stroke-linejoin="round">
<!-- ===== activity bar ===== -->
<g stroke="#858585" stroke-width="2.2">
  <!-- explorer -->
  <path d="M31 64.5 H24 Q21 64.5 21 67.5 V89.5 Q21 92.5 24 92.5 H40"/>
  <path d="M31 82 V57.5 Q31 54.5 34 54.5 H46 L53.5 62 V74"/>
  <path d="M31 82 H40"/>
  <path d="M46 54.5 V62 H53.5" />
</g>
<circle cx="51" cy="85.7" r="12.8" fill="#0078d4"/>
<text x="51" y="92.8" fill="#fff" font-family="Liberation Sans" font-weight="bold" font-size="19" text-anchor="middle">1</text>
<!-- search active -->
<g stroke="#ffffff" stroke-width="2.4">
  <circle cx="43.2" cy="150.2" r="12.2"/>
  <path d="M34.6 159 L22 172.8"/>
</g>
<!-- scm -->
<g stroke="#858585" stroke-width="2.2">
  <circle cx="29.5" cy="226.5" r="5.3"/>
  <circle cx="46.4" cy="233" r="5.3"/>
  <circle cx="29.5" cy="252.5" r="5.3"/>
  <path d="M29.5 231.8 V247.2"/>
  <path d="M46.4 238.3 Q46 244 38 244.5 Q31 245 29.8 247"/>
</g>
<circle cx="51" cy="252.2" r="12.8" fill="#0078d4"/>
<text x="51" y="259.3" fill="#fff" font-family="Liberation Sans" font-weight="bold" font-size="19" text-anchor="middle">4</text>
<!-- debug -->
<g stroke="#858585" stroke-width="2.2">
  <path d="M32 320 V304.5 L56.5 319 L40.8 329.5"/>
  <ellipse cx="28.4" cy="333" rx="5.6" ry="7.6"/>
  <path d="M23 329 H34 M20 333.5 H23 M34 333.5 H37 M20.5 325 L24 328 M36 325 L32.8 328 M20.5 341.5 L24 338.5 M36 341.5 L32.8 338.5"/>
</g>
<!-- extensions -->
<g stroke="#858585" stroke-width="2.2">
  <rect x="41.6" y="387.3" width="15" height="15" rx="2.2"/>
  <path d="M21.5 394.8 H32 Q34.5 394.8 34.5 397.3 V409.6 H47 Q49.5 409.6 49.5 412.1 V422 Q49.5 424.4 47 424.4 H21.8 Q19.4 424.4 19.4 422 V397.3 Q19.4 394.8 21.5 394.8 Z"/>
  <path d="M19.4 409.6 H34.5 V424.4"/>
</g>
<!-- account -->
<g stroke="#858585" stroke-width="2.2">
  <circle cx="38" cy="1064.7" r="18.3"/>
  <circle cx="38" cy="1058.5" r="7.2"/>
  <path d="M26.5 1078.5 Q29 1067.5 38 1067.5 Q47 1067.5 49.5 1078.5"/>
</g>
<!-- gear -->
<g stroke="#858585" stroke-width="2.2">
  <path d="M34.48 1134.56 L34.45 1129.44 L41.55 1129.44 L41.52 1134.56 L44.80 1135.92 L48.40 1132.28 L53.42 1137.30 L49.78 1140.90 L51.14 1144.18 L56.26 1144.15 L56.26 1151.25 L51.14 1151.22 L49.78 1154.50 L53.42 1158.10 L48.40 1163.12 L44.80 1159.48 L41.52 1160.84 L41.55 1165.96 L34.45 1165.96 L34.48 1160.84 L31.20 1159.48 L27.60 1163.12 L22.58 1158.10 L26.22 1154.50 L24.86 1151.22 L19.74 1151.25 L19.74 1144.15 L24.86 1144.18 L26.22 1140.90 L22.58 1137.30 L27.60 1132.28 L31.20 1135.92 Z"/>
  <circle cx="38" cy="1147.7" r="4.3"/>
</g>

<!-- ===== sidebar header icons ===== -->
<g stroke="#c5c5c5" stroke-width="1.7">
  <!-- refresh -->
  <path d="M383 55.2 A9.8 9.8 0 1 0 393 53.8"/>
  <path d="M379.5 52.5 H386 V59"/>
  <!-- clear results -->
  <path d="M428.5 54 H450.8 M428.5 59.5 H450.8 M428.5 65 H442 M428.5 70.5 H440 M443.5 64.5 L450.5 71.5 M450.5 64.5 L443.5 71.5"/>
  <!-- new search editor -->
  <path d="M486 55.5 V70.5 Q486 71.5 487 71.5 H499 Q500 71.5 500 70.5 V57 L495 52 H490.5"/>
  <path d="M495 52 V57 H500"/>
  <path d="M478.5 55 H487.5 M483 50.5 V59.5"/>
  <!-- collapse all -->
  <rect x="532.5" y="59" width="12.5" height="12.5" rx="2"/>
  <path d="M536.5 59 V55.5 Q536.5 53 539 53 H547.5 Q550 53 550 55.5 V64 Q550 66.5 547.5 66.5 H545"/>
  <path d="M535.5 65.2 H542"/>
</g>
<!-- search input chevron -->
<path d="M89 113.5 L97 121.2 L89 128.8" stroke="#c5c5c5" stroke-width="1.6"/>
<!-- Aa AbI -->
<text x="465" y="128" fill="#a0a0a0" font-family="Liberation Sans" font-size="19.5">Aa</text>
<text x="499.5" y="127.5" fill="#a0a0a0" font-family="Liberation Sans" font-size="17" textLength="21" lengthAdjust="spacingAndGlyphs">AbI</text>
<path d="M499 111.5 H521 M499 130.5 H521" stroke="#a0a0a0" stroke-width="1.3"/>
<!-- regex toggle .* -->
<rect x="535" y="124.5" width="6" height="6" fill="#ffffff"/>
<path d="M549.5 112 V124 M544.3 115 L554.7 121 M554.7 115 L544.3 121" stroke="#ffffff" stroke-width="2"/>
<!-- more dots -->
<g fill="#c5c5c5"><circle cx="540" cy="155" r="1.6"/><circle cx="547.5" cy="155" r="1.6"/><circle cx="555" cy="155" r="1.6"/></g>
<!-- tree chevron down -->
<path d="M99 220.3 L106.7 228.2 L114.5 220.3" stroke="#c5c5c5" stroke-width="1.6"/>
<!-- html file icon -->
<path d="M138 218.5 L132.5 224.2 L138 230 M141.8 218.5 L147.3 224.2 L141.8 230" stroke="#e5a031" stroke-width="1.7"/>
<!-- tab icon -->
<path d="M613.5 57.2 L608 62.8 L613.5 68.5 M617.5 57.2 L623 62.8 L617.5 68.5" stroke="#e5a031" stroke-width="1.7"/>
<!-- breadcrumb icon -->
<path d="M622.5 103.2 L617 108.8 L622.5 114.5 M626.5 103.2 L632 108.8 L626.5 114.5" stroke="#e5a031" stroke-width="1.7"/>
<path d="M754.5 101.5 L761.5 108.7 L754.5 116" stroke="#a9a9a9" stroke-width="1.6"/>

<!-- ===== editor toolbar icons ===== -->
<g stroke="#c5c5c5" stroke-width="1.7">
  <!-- compare -->
  <circle cx="1343.5" cy="56.5" r="3.6"/>
  <circle cx="1358" cy="73" r="3.6"/>
  <path d="M1343.5 60.2 V66 Q1343.5 70.5 1348 70.5 H1352 M1348.5 67 L1352 70.5 L1348.5 74"/>
  <path d="M1358 69.4 V61 Q1358 56.5 1353.5 56.5 H1349.5 M1353 53 L1349.5 56.5 L1353 60"/>
  <!-- prev change -->
  <circle cx="1403" cy="62.8" r="6.8" stroke-width="2.5"/>
  <path d="M1396 62.8 H1390 M1393.5 59 L1389.7 62.8 L1393.5 66.6 M1410 62.8 H1415" stroke-width="2.2"/>
</g>
<g stroke="#6e6e6e" stroke-width="2.2">
  <circle cx="1453.5" cy="62.8" r="6.8"/>
  <path d="M1441 62.8 H1446.5 M1460.5 62.8 H1466"/>
  <circle cx="1502" cy="62.8" r="6.8"/>
  <path d="M1489.5 62.8 H1495 M1509 62.8 H1517.5 M1514 59 L1517.8 62.8 L1514 66.6"/>
</g>
<g stroke="#c5c5c5" stroke-width="1.8">
  <circle cx="1555.8" cy="63.3" r="11"/>
  <path d="M1554.5 56 V71 M1555 57.5 L1560.5 64.5"/>
  <circle cx="1554.5" cy="56.3" r="1.8" fill="#c5c5c5"/>
  <circle cx="1561" cy="64.5" r="1.8" fill="#c5c5c5"/>
  <circle cx="1554.5" cy="70.5" r="1.8" fill="#c5c5c5"/>
  <!-- split -->
  <rect x="1597.5" y="53" width="20.5" height="20" rx="2" stroke-width="2"/>
  <path d="M1607.7 53 V73" stroke-width="2"/>
</g>
<g fill="#c5c5c5"><circle cx="1649.5" cy="63.5" r="1.9"/><circle cx="1658.2" cy="63.5" r="1.9"/><circle cx="1666.8" cy="63.5" r="1.9"/></g>

<!-- ===== status bar icons ===== -->
<g stroke="#ffffff" stroke-width="1.8">
  <circle cx="30" cy="1202.5" r="2.8"/>
  <circle cx="30" cy="1218" r="2.8"/>
  <circle cx="40.2" cy="1207" r="2.8"/>
  <path d="M30 1205.3 V1215.2 M40.2 1209.8 Q40 1212.5 35 1213 Q31 1213.5 30.3 1215"/>
  <!-- cloud -->
  <path d="M155.5 1215.5 H153.5 Q150 1215.5 150 1212 Q150 1208.8 153.2 1208.5 Q154.3 1203.5 159.2 1203.5 Q164 1203.5 165.2 1208 Q168.6 1208.4 168.6 1211.8 Q168.6 1215.5 165 1215.5 H163"/>
  <path d="M159.2 1219.2 V1209.5 M156 1212.5 L159.2 1209.2 L162.4 1212.5"/>
  <!-- error -->
  <circle cx="207.3" cy="1210.5" r="8.8"/>
  <path d="M203.5 1206.7 L211.1 1214.3 M211.1 1206.7 L203.5 1214.3"/>
  <!-- warning -->
  <path d="M252.8 1201.5 L262.2 1219 H243.4 Z"/>
  <path d="M252.8 1207.5 V1213" />
  <circle cx="252.8" cy="1216" r="0.6" fill="#fff"/>
  <!-- broadcast -->
  <circle cx="1368.5" cy="1208.5" r="2"/>
  <path d="M1368.5 1211 V1219 M1364.3 1212.5 A5.8 5.8 0 1 1 1372.7 1212.5 M1361.8 1215 A9 9 0 1 1 1375.2 1215"/>
  <!-- check -->
  <path d="M1562 1211.5 L1567 1217.5 L1577 1201.5" stroke-width="1.6"/>
  <!-- feedback -->
  <circle cx="1612" cy="1206" r="3.8"/>
  <path d="M1605 1219.5 Q1606 1212 1612 1212 Q1618 1212 1619 1219.5"/>
  <path d="M1616 1201 H1628 V1211.5 H1622 L1619.5 1214"/>
  <!-- bell -->
  <path d="M1656 1215.5 H1672 L1669.5 1212.5 V1207.5 Q1669.5 1201.5 1664 1201.5 Q1658.5 1201.5 1658.5 1207.5 V1212.5 Z"/>
  <path d="M1661.5 1218.5 Q1664 1221 1666.5 1218.5"/>
</g>
</svg>

<svg width="1700" height="1228" style="position:absolute;left:0;top:0">
<path d="M0 0 H7 A7 7 0 0 0 0 7 Z" fill="#6fa0d6"/>
<path d="M1700 0 H1693 A7 7 0 0 1 1700 7 Z" fill="#6fa0d6"/>
<path d="M0 1228 H7 A7 7 0 0 1 0 1221 Z" fill="#8aa2bb"/>
<path d="M1700 1228 H1693 A7 7 0 0 0 1700 1221 Z" fill="#8aa2bb"/>
</svg>
</body></html>
